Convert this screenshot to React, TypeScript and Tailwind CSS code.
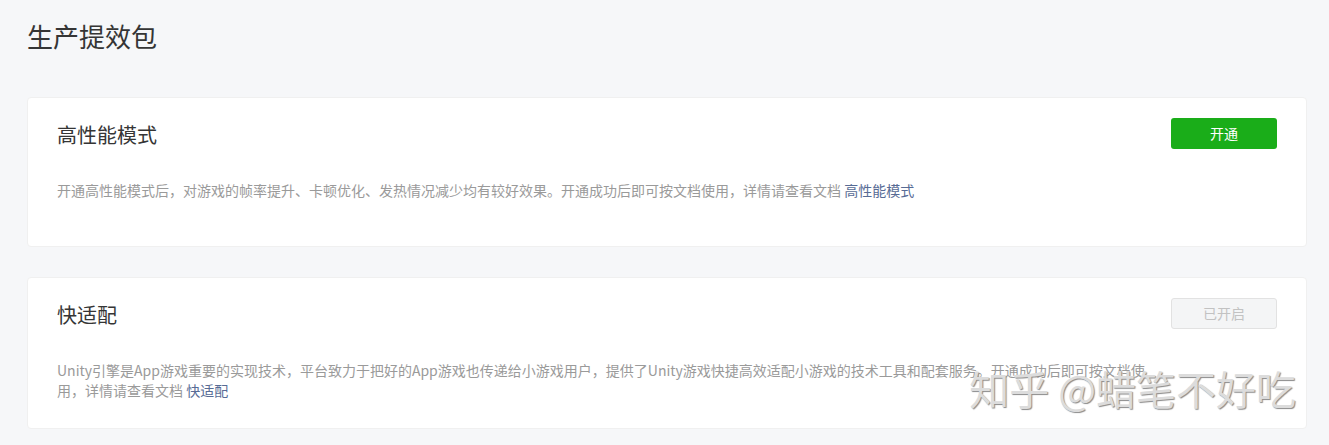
import React from "react";

const font = { fontFamily: '"Noto Sans CJK SC", "Noto Sans", sans-serif' };

export default function App() {
  return (
    <div
      className="min-h-[445px] w-full bg-[#f6f7f9] pl-[27px] pr-[22px] pt-[18px] pb-[17px]"
      style={font}
    >
      <h1 className="text-[26px] leading-[36px] text-[#353535] font-normal">生产提效包</h1>
      <div className="mt-[43px] flex flex-col gap-[30px]">
        <section className="rounded-[4px] border border-[#f0f0f0] bg-white px-[29px] pt-[19px] pb-[26px]">
          <div className="flex items-center justify-between">
            <h2 className="pt-[4px] text-[20px] leading-[28px] text-[#353535] font-normal">高性能模式</h2>
            <button className="h-[31px] w-[106px] rounded-[3px] bg-[#1aad19] text-[14px] text-white">开通</button>
          </div>
          <p className="mt-[31px] min-h-[40px] max-w-[1100px] text-[14px] leading-[20px] text-[#9a9a9a]">
            开通高性能模式后，对游戏的帧率提升、卡顿优化、发热情况减少均有较好效果。开通成功后即可按文档使用，详情请查看文档{" "}
            <a className="text-[#576b95]">高性能模式</a>
          </p>
        </section>
        <section className="relative rounded-[4px] border border-[#f0f0f0] bg-white px-[29px] pt-[19px] pb-[28px]">
          <div className="flex items-center justify-between">
            <h2 className="pt-[4px] text-[20px] leading-[28px] text-[#353535] font-normal">快适配</h2>
            <button className="h-[31px] w-[106px] rounded-[3px] border border-[#e2e2e2] bg-[#f4f5f6] text-[14px] text-[#c2c2c2]">
              已开启
            </button>
          </div>
          <p className="mt-[31px] min-h-[40px] max-w-[1100px] text-[14px] leading-[20px] text-[#9a9a9a]">
            Unity引擎是App游戏重要的实现技术，平台致力于把好的App游戏也传递给小游戏用户，提供了Unity游戏快捷高效适配小游戏的技术工具和配套服务。开通成功后即可按文档使用，详情请查看文档{" "}
            <a className="text-[#576b95]">快适配</a>
          </p>
          <div className="pointer-events-none absolute right-[10px] top-[86px] whitespace-nowrap text-[40px] leading-[48px] text-[#dcdcdc] [text-shadow:1px_1px_1px_#8a8a8a]">
            知乎 @蜡笔不好吃
          </div>
        </section>
      </div>
    </div>
  );
}
